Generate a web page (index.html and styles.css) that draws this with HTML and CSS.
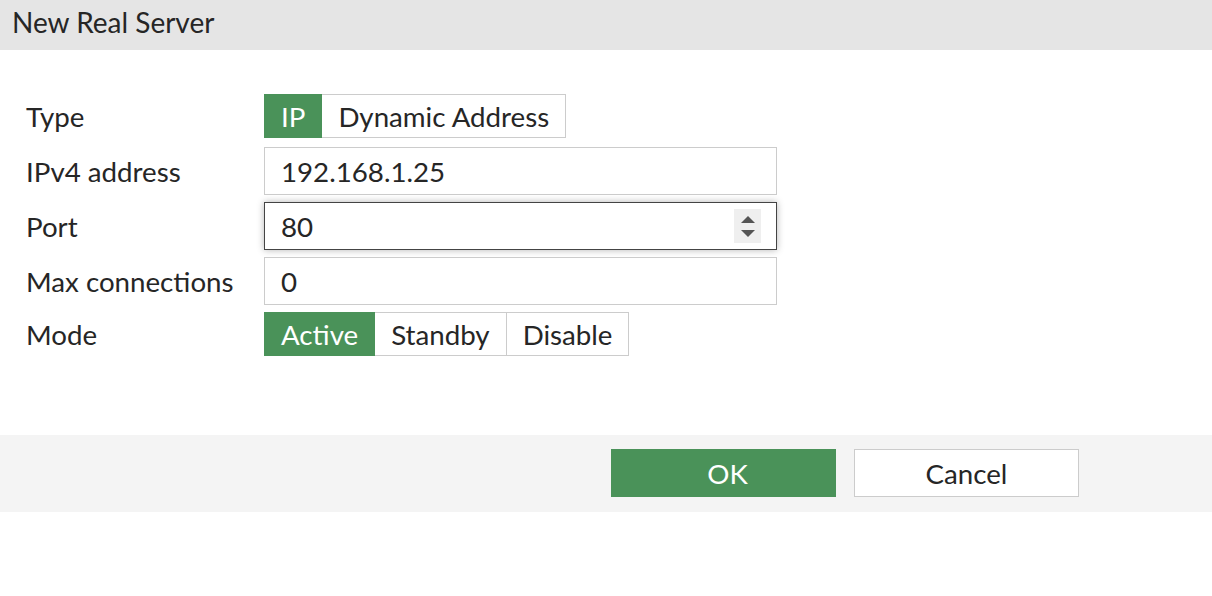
FILE: index.html
```html
<!DOCTYPE html>
<html>
<head>
    <meta charset="utf-8">
    <title>New Real Server</title>
    <link rel="stylesheet" href="styles.css">
</head>
<body>
    <div class="header">New Real Server</div>

    <div class="form">
        <div class="row choice first">
            <label>Type</label>
            <div class="toggle">
                <span class="opt selected">IP</span>
                <span class="opt">Dynamic Address</span>
            </div>
        </div>
        <div class="row">
            <label for="ipv4">IPv4 address</label>
            <div class="field">
                <input type="text" id="ipv4" value="192.168.1.25">
            </div>
        </div>
        <div class="row">
            <label for="port">Port</label>
            <div class="field focused">
                <input type="text" id="port" value="80">
                <div class="spinner">
                    <span class="up"></span>
                    <span class="down"></span>
                </div>
            </div>
        </div>
        <div class="row">
            <label for="maxconn">Max connections</label>
            <div class="field">
                <input type="text" id="maxconn" value="0">
            </div>
        </div>
        <div class="row choice">
            <label>Mode</label>
            <div class="toggle">
                <span class="opt selected">Active</span>
                <span class="opt">Standby</span>
                <span class="opt">Disable</span>
            </div>
        </div>
    </div>

    <div class="footer">
        <button class="primary">OK</button>
        <button>Cancel</button>
    </div>
</body>
</html>
```

FILE: styles.css
```css
body {
    margin: 0;
    font-family: Lato, "Liberation Sans", sans-serif;
    font-size: 27.7px;
    color: #262626;
    background: #fff;
}
.header {
    height: 50px;
    line-height: 44px;
    padding-left: 12px;
    font-size: 28px;
    background: #e5e5e5;
}
.form {
    padding: 44px 0 79px 26px;
    display: flex;
    flex-direction: column;
    gap: 7px;
}
.row {
    display: flex;
    align-items: center;
    height: 48px;
}
.row.choice {
    height: 44px;
}
.row.first {
    margin-bottom: 2px;
}
label {
    width: 238px;
}
.toggle {
    display: flex;
    height: 44px;
}
.opt {
    display: flex;
    align-items: center;
    padding: 0 16px;
    border: 1px solid #ccc;
    border-left: none;
    background: #fff;
}
.opt:first-child {
    border-left: 1px solid #ccc;
}
.opt.selected {
    background: #4a9259;
    border-color: #4a9259;
    color: #fff;
}
.field {
    display: flex;
    align-items: center;
    width: 511px;
    height: 46px;
    border: 1px solid #ccc;
    background: #fff;
}
.field.focused {
    border-color: #444;
    box-shadow: 0 0 7px rgba(0, 0, 0, 0.3);
}
.field input {
    flex: 1;
    min-width: 0;
    border: none;
    outline: none;
    padding: 0 0 0 16px;
    font-family: inherit;
    font-size: 27.7px;
    color: #262626;
    background: transparent;
}
.spinner {
    width: 27px;
    height: 34px;
    margin-right: 15px;
    background: #efefef;
    display: flex;
    flex-direction: column;
    align-items: center;
    justify-content: center;
    gap: 7px;
}
.spinner .up,
.spinner .down {
    width: 0;
    height: 0;
    border-left: 7px solid transparent;
    border-right: 7px solid transparent;
}
.spinner .up {
    border-bottom: 7px solid #555;
}
.spinner .down {
    border-top: 7px solid #555;
}
.footer {
    display: flex;
    justify-content: flex-end;
    gap: 18px;
    padding: 14px 133px 15px 0;
    background: #f4f4f4;
}
button {
    width: 225px;
    height: 48px;
    border: 1px solid #ccc;
    background: #fff;
    font-family: inherit;
    font-size: 27.7px;
    color: #262626;
    cursor: pointer;
}
button.primary {
    padding-left: 14px;
    background: #4a9259;
    border-color: #4a9259;
    color: #fff;
}
```
